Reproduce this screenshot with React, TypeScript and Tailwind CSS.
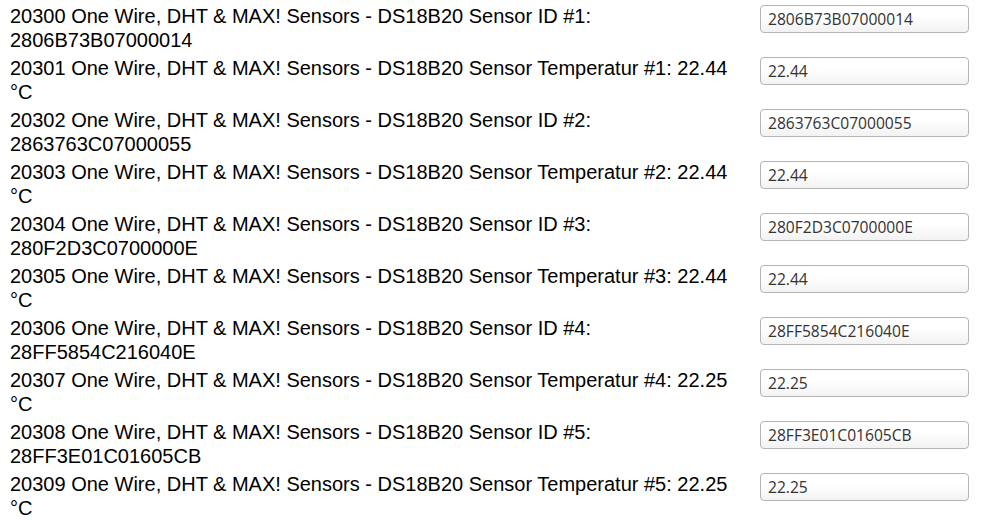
const rows: { label: string; value: string }[] = [
  { label: '20300 One Wire, DHT & MAX! Sensors - DS18B20 Sensor ID #1: 2806B73B07000014', value: '2806B73B07000014' },
  { label: '20301 One Wire, DHT & MAX! Sensors - DS18B20 Sensor Temperatur #1: 22.44 °C', value: '22.44' },
  { label: '20302 One Wire, DHT & MAX! Sensors - DS18B20 Sensor ID #2: 2863763C07000055', value: '2863763C07000055' },
  { label: '20303 One Wire, DHT & MAX! Sensors - DS18B20 Sensor Temperatur #2: 22.44 °C', value: '22.44' },
  { label: '20304 One Wire, DHT & MAX! Sensors - DS18B20 Sensor ID #3: 280F2D3C0700000E', value: '280F2D3C0700000E' },
  { label: '20305 One Wire, DHT & MAX! Sensors - DS18B20 Sensor Temperatur #3: 22.44 °C', value: '22.44' },
  { label: '20306 One Wire, DHT & MAX! Sensors - DS18B20 Sensor ID #4: 28FF5854C216040E', value: '28FF5854C216040E' },
  { label: '20307 One Wire, DHT & MAX! Sensors - DS18B20 Sensor Temperatur #4: 22.25 °C', value: '22.25' },
  { label: '20308 One Wire, DHT & MAX! Sensors - DS18B20 Sensor ID #5: 28FF3E01C01605CB', value: '28FF3E01C01605CB' },
  { label: '20309 One Wire, DHT & MAX! Sensors - DS18B20 Sensor Temperatur #5: 22.25 °C', value: '22.25' },
];

export default function App() {
  return (
    <div className="min-h-screen bg-white px-[10px] pt-[4px] font-['Liberation_Sans',Arial,sans-serif] text-black">
      {rows.map((r, i) => (
        <div key={i} className="mb-[4px] flex items-start">
          <div className="w-[740px] text-[20px] leading-[24px]">{r.label}</div>
          <input
            readOnly
            value={r.value}
            className="ml-[10px] mt-[1px] h-[28px] w-[209px] rounded-[4px] border border-[#b4b4b4] bg-gradient-to-b from-white from-40% to-[#f2f2f2] px-[7px] font-['Open_Sans',sans-serif] text-[15.6px] text-[#333] outline-none"
          />
        </div>
      ))}
    </div>
  );
}
